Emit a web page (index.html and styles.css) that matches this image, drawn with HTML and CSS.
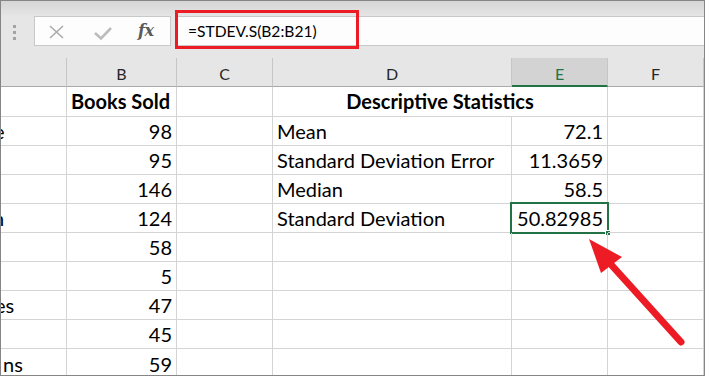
FILE: index.html
```html
<!DOCTYPE html>
<html>
<head>
<meta charset="utf-8">
<link rel="stylesheet" href="styles.css">
</head>
<body>
<div class="frame">
  <div class="toolbar">
    <div class="grip"><span></span><span></span><span></span></div>
    <div class="fxbox">
      <svg class="fxicons" width="135" height="28" viewBox="0 0 135 28">
        <path d="M15 9 L28 21 M28 9 L15 21" stroke="#ababab" stroke-width="1.6" fill="none"/>
        <path d="M60 16 L66 21.5 L76 11" stroke="#bcbcbc" stroke-width="2.6" fill="none" stroke-linejoin="miter"/>
      </svg>
      <span class="fx">fx</span>
    </div>
    <div class="formula">=STDEV.S(B2:B21)</div>
  </div>
  <div class="sheet">
    <div class="hd"></div>
    <div class="hd">B</div>
    <div class="hd">C</div>
    <div class="hd">D</div>
    <div class="hd sel">E</div>
    <div class="hd">F</div>

    <div class="c r1"></div>
    <div class="c r1 bold">Books Sold</div>
    <div class="c r1"></div>
    <div class="c r1 bold merged">Descriptive Statistics</div>
    <div class="c r1"></div>

    <div class="c a"><span class="frag f-e">e</span></div>
    <div class="c num">98</div>
    <div class="c"></div>
    <div class="c">Mean</div>
    <div class="c num">72.1</div>
    <div class="c"></div>

    <div class="c a"></div>
    <div class="c num">95</div>
    <div class="c"></div>
    <div class="c">Standard Deviation Error</div>
    <div class="c num">11.3659</div>
    <div class="c"></div>

    <div class="c a"></div>
    <div class="c num">146</div>
    <div class="c"></div>
    <div class="c">Median</div>
    <div class="c num">58.5</div>
    <div class="c"></div>

    <div class="c a"><span class="frag f-n">n</span></div>
    <div class="c num">124</div>
    <div class="c"></div>
    <div class="c">Standard Deviation</div>
    <div class="c num active">50.82985<span class="selbox"></span><span class="handle"></span></div>
    <div class="c"></div>

    <div class="c a"></div>
    <div class="c num">58</div>
    <div class="c"></div>
    <div class="c"></div>
    <div class="c"></div>
    <div class="c"></div>

    <div class="c a"></div>
    <div class="c num">5</div>
    <div class="c"></div>
    <div class="c"></div>
    <div class="c"></div>
    <div class="c"></div>

    <div class="c a"><span class="frag f-es">es</span></div>
    <div class="c num">47</div>
    <div class="c"></div>
    <div class="c"></div>
    <div class="c"></div>
    <div class="c"></div>

    <div class="c a"></div>
    <div class="c num">45</div>
    <div class="c"></div>
    <div class="c"></div>
    <div class="c"></div>
    <div class="c"></div>

    <div class="c a last"><span class="frag f-ns">ns</span></div>
    <div class="c num last">59</div>
    <div class="c last"></div>
    <div class="c last"></div>
    <div class="c last"></div>
    <div class="c last"></div>
  </div>
  <div class="redbox"></div>
  <svg class="arrow" width="705" height="376" viewBox="0 0 705 376">
    <line x1="681" y1="342" x2="606" y2="259" stroke="#ed1c24" stroke-width="7" stroke-linecap="round"/>
    <polygon points="589,239 601,273 622,257" fill="#ed1c24"/>
  </svg>
</div>
</body>
</html>
```

FILE: styles.css
```css
* { box-sizing: border-box; }
html, body { margin: 0; padding: 0; background: #fff; }
.frame {
  position: relative;
  width: 705px;
  height: 376px;
  border: 1px solid #858585;
  overflow: hidden;
  font-family: Lato, "Liberation Sans", sans-serif;
  color: #000;
}
.toolbar {
  height: 57px;
  padding-top: 15px;
  display: flex;
  align-items: flex-start;
  background: linear-gradient(#d6d6d6 0px, #e4e4e4 14px, #e6e6e6 15px);
}
.grip {
  width: 33px;
  height: 30px;
  display: flex;
  flex-direction: column;
  align-items: flex-start;
  padding: 9px 0 0 12px;
  gap: 3px;
}
.grip span {
  width: 3px;
  height: 3px;
  background: #a3a3a3;
}
.fxbox {
  position: relative;
  width: 137px;
  height: 30px;
  background: #fdfdfd;
  border: 1px solid #c8c8c8;
}
.fxicons { display: block; }
.fx {
  position: absolute;
  left: 103px;
  top: 1px;
  font-family: "DejaVu Serif", "Liberation Serif", serif;
  font-style: italic;
  font-weight: 700;
  font-size: 16px;
  line-height: 26px;
  letter-spacing: -0.5px;
  color: #5a5a5a;
}
.formula {
  flex: 1;
  margin-left: 5px;
  height: 30px;
  background: #fdfdfd;
  border-top: 1px solid #c8c8c8;
  border-bottom: 1px solid #c8c8c8;
  padding-left: 12px;
  font-size: 15.6px;
  line-height: 28px;
  color: #000;
}
.sheet {
  display: grid;
  grid-template-columns: 66px 110px 96px 239px 96px 96px;
  grid-template-rows: 29px 30px repeat(8, 29px) 26px;
}
.hd {
  background: #e6e6e6;
  border-right: 1px solid #c6c6c6;
  border-bottom: 1px solid #a9a9a9;
  display: flex;
  align-items: flex-end;
  justify-content: center;
  font-size: 16px;
  line-height: 16px;
  padding-bottom: 4px;
  color: #262626;
}
.hd.sel {
  background: #d3d3d3;
  color: #217346;
  border-bottom: 2px solid #217346;
  padding-bottom: 3px;
}
.c {
  position: relative;
  border-right: 1px solid #d4d4d4;
  border-bottom: 1px solid #d4d4d4;
  display: flex;
  align-items: flex-end;
  font-size: 20px;
  line-height: 20px;
  padding: 0 4px 4px 4px;
  white-space: nowrap;
}
.c.r1 { padding-bottom: 5px; }
.c.last { border-bottom: none; padding-bottom: 1px; }
.c.a { overflow: hidden; padding-left: 0; }
.bold { font-weight: 700; }
.num { justify-content: flex-end; }
.merged { grid-column: span 2; justify-content: center; }
.frag { display: block; }
.f-e { margin-left: -7px; }
.f-n { margin-left: -8px; }
.f-es { margin-left: -6px; }
.f-ns { margin-left: 2px; }
.selbox {
  position: absolute;
  left: -2px;
  top: -2px;
  width: 99px;
  height: 32px;
  border: 2px solid #217346;
}
.handle {
  position: absolute;
  left: 93px;
  top: 26px;
  width: 6px;
  height: 6px;
  background: #217346;
  border: 1px solid #fff;
}
.redbox {
  position: absolute;
  left: 174px;
  top: 9px;
  width: 184px;
  height: 39px;
  border: 3px solid #ed1c24;
}
.arrow {
  position: absolute;
  left: -1px;
  top: -1px;
  pointer-events: none;
}
```
